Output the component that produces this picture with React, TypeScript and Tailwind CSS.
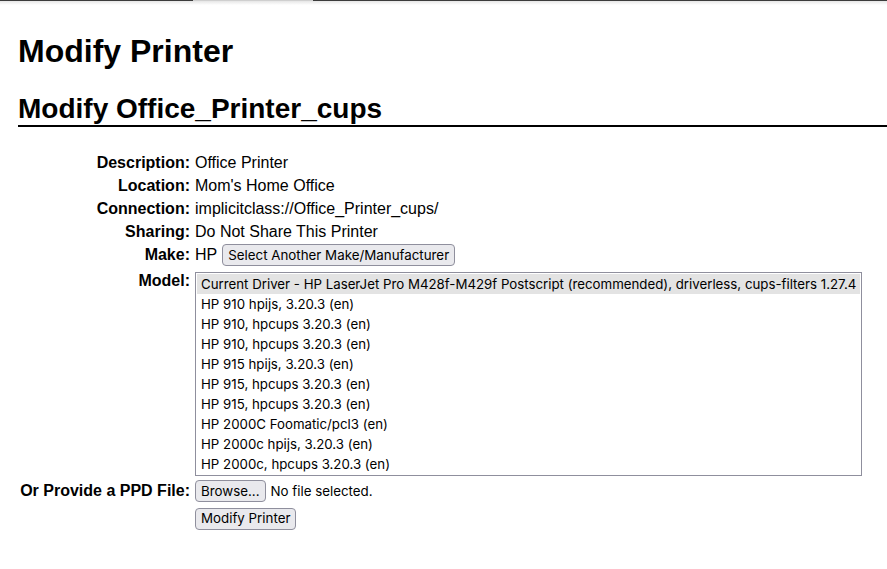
import React from "react";

const options = [
  "Current Driver - HP LaserJet Pro M428f-M429f Postscript (recommended), driverless, cups-filters 1.27.4",
  "HP 910 hpijs, 3.20.3 (en)",
  "HP 910, hpcups 3.20.3 (en)",
  "HP 910, hpcups 3.20.3 (en)",
  "HP 915 hpijs, 3.20.3 (en)",
  "HP 915, hpcups 3.20.3 (en)",
  "HP 915, hpcups 3.20.3 (en)",
  "HP 2000C Foomatic/pcl3 (en)",
  "HP 2000c hpijs, 3.20.3 (en)",
  "HP 2000c, hpcups 3.20.3 (en)",
  "HP 2000c, hpcups 3.20.3 (en)",
];

const btn =
  "inline-flex items-center border border-[#8f8f9d] rounded-[4px] bg-[#e9e9ed] text-[13.33px] leading-none text-black px-[5px] font-['Inter',sans-serif] whitespace-nowrap";

function Row({ label, children }: { label: string; children: React.ReactNode }) {
  return (
    <div className="flex h-[23px] items-center">
      <div className="w-[173px] text-right font-bold pr-[1px]">{label}</div>
      <div className="pl-[4px] flex items-center">{children}</div>
    </div>
  );
}

export default function App() {
  return (
    <div className="min-h-[569px] bg-white text-black font-['Liberation_Sans',Arial,sans-serif] text-[16px] leading-[1.15]">
      <div className="flex h-[1px]">
        <div className="w-[193px] bg-[#3c3c3c]" />
        <div className="w-[120px] bg-[#cfcfcf]" />
        <div className="flex-1 bg-[#3c3c3c]" />
      </div>
      <div className="h-[4px] bg-gradient-to-b from-[#e6e6e6] to-white" />
      <div className="px-[18px]">
        <h1 className="mt-[28px] text-[32px] font-bold leading-[1.15]">Modify Printer</h1>
        <h2 className="mt-[23px] text-[28px] font-bold leading-[1.15] border-b-2 border-black mr-[-18px]">
          Modify Office_Printer_cups
        </h2>
        <div className="mt-[25px]">
          <Row label="Description:">Office Printer</Row>
          <Row label="Location:">Mom's Home Office</Row>
          <Row label="Connection:">implicitclass://Office_Printer_cups/</Row>
          <Row label="Sharing:">Do Not Share This Printer</Row>
          <div className="flex h-[23px] items-center">
            <div className="w-[173px] text-right font-bold pr-[1px]">Make:</div>
            <div className="pl-[4px] flex items-center gap-[5px]">
              <span>HP</span>
              <span className={btn + " h-[22px]"}>Select Another Make/Manufacturer</span>
            </div>
          </div>
          <div className="flex mt-[3px]">
            <div className="w-[173px] text-right font-bold pr-[1px] pt-[2px]">Model:</div>
            <div className="pl-[4px]">
              <div className="mt-[2px] w-[667px] h-[204px] border border-[#8f8f9d] p-[1px] overflow-hidden font-['Inter',sans-serif] text-[13.27px] leading-[20px]">
                {options.map((o, i) => (
                  <div
                    key={i}
                    className={
                      "h-[20px] px-[4px] whitespace-nowrap " + (i === 0 ? "bg-[#e3e3e3]" : "")
                    }
                  >
                    {o}
                  </div>
                ))}
              </div>
            </div>
          </div>
          <div className="flex h-[23px] items-center mt-[4px]">
            <div className="w-[173px] text-right font-bold pr-[1px] whitespace-nowrap">Or Provide a PPD File:</div>
            <div className="pl-[4px] flex items-center gap-[5px]">
              <span className={btn + " h-[22px]"}>Browse...</span>
              <span className="font-['Inter',sans-serif] text-[13.33px] whitespace-nowrap">No file selected.</span>
            </div>
          </div>
          <div className="flex h-[26px] items-center mt-[3px]">
            <div className="w-[173px]" />
            <div className="pl-[4px] flex items-center">
              <span className={btn + " h-[22px]"}>Modify Printer</span>
            </div>
          </div>
        </div>
      </div>
    </div>
  );
}
